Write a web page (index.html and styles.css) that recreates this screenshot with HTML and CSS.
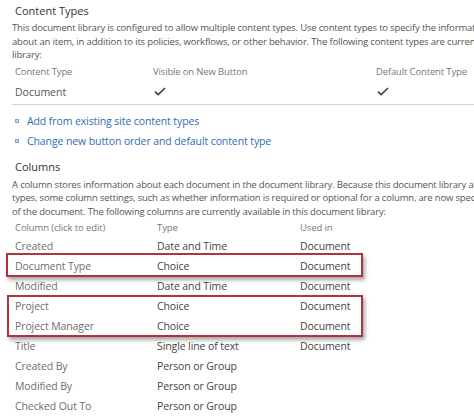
FILE: index.html
```html
<!DOCTYPE html>
<html>
<head>
<meta charset="utf-8">
<link rel="stylesheet" href="styles.css">
</head>
<body>
<div class="page">
  <section class="ct">
    <h2 class="sec-title">Content Types</h2>
    <p class="desc">
      <span class="ln">This document library is configured to allow multiple content types. Use content types to specify the information you want to display</span>
      <span class="ln">about an item, in addition to its policies, workflows, or other behavior. The following content types are currently available in this</span>
      <span class="ln">library:</span>
    </p>
    <div class="ct-table">
      <div class="ct-row ct-head">
        <span>Content Type</span>
        <span>Visible on New Button</span>
        <span>Default Content Type</span>
      </div>
      <div class="ct-row ct-body">
        <span>Document</span>
        <span><svg class="check" width="12" height="9" viewBox="0 0 12 9"><path d="M1 4.6 L4.2 7.6 L11 1" fill="none" stroke="#444" stroke-width="1.7"/></svg></span>
        <span><svg class="check" width="12" height="9" viewBox="0 0 12 9"><path d="M1 4.6 L4.2 7.6 L11 1" fill="none" stroke="#444" stroke-width="1.7"/></svg></span>
      </div>
    </div>
    <div class="sep"></div>
    <ul class="links">
      <li><span class="bullet"></span><a href="#">Add from existing site content types</a></li>
      <li><span class="bullet"></span><a href="#">Change new button order and default content type</a></li>
    </ul>
  </section>
  <section class="cols">
    <h2 class="sec-title">Columns</h2>
    <p class="desc">
      <span class="ln">A column stores information about each document in the document library. Because this document library allows multiple content</span>
      <span class="ln">types, some column settings, such as whether information is required or optional for a column, are now specified by the content type</span>
      <span class="ln">of the document. The following columns are currently available in this document library:</span>
    </p>
    <div class="col-table">
      <div class="col-row col-head"><span>Column (click to edit)</span><span>Type</span><span>Used in</span></div>
      <div class="col-row"><a href="#">Created</a><span>Date and Time</span><span>Document</span></div>
      <div class="group group-one">
        <div class="col-row"><a href="#">Document Type</a><span>Choice</span><span>Document</span></div>
      </div>
      <div class="col-row"><a href="#">Modified</a><span>Date and Time</span><span>Document</span></div>
      <div class="group group-two">
        <div class="col-row"><a href="#">Project</a><span>Choice</span><span>Document</span></div>
        <div class="col-row"><a href="#">Project Manager</a><span>Choice</span><span>Document</span></div>
      </div>
      <div class="col-row"><a href="#">Title</a><span>Single line of text</span><span>Document</span></div>
      <div class="col-row"><a href="#">Created By</a><span>Person or Group</span><span></span></div>
      <div class="col-row"><a href="#">Modified By</a><span>Person or Group</span><span></span></div>
      <div class="col-row"><a href="#">Checked Out To</a><span>Person or Group</span><span></span></div>
    </div>
  </section>
</div>
</body>
</html>
```
FILE: styles.css
```css
html, body {
  margin: 0;
  padding: 0;
  background: #fff;
  overflow: hidden;
}
body {
  width: 474px;
  height: 417px;
  font-family: "Open Sans", "Liberation Sans", sans-serif;
  color: #444;
}
.page {
  width: 700px;
  padding-left: 12px;
}
.sec-title {
  margin: 0;
  padding: 3px 0 0 3px;
  height: 16px;
  line-height: 16px;
  font-size: 11px;
  font-weight: normal;
  color: #333;
}
.desc {
  margin: 2px 0 0 0;
  font-size: 9.5px;
  letter-spacing: -0.17px;
  line-height: 13.5px;
  color: #555;
}
.ln {
  display: block;
  white-space: nowrap;
}
.ct-table {
  padding-left: 3px;
}
.ct-row {
  display: grid;
  grid-template-columns: 138px 223px 1fr;
  height: 20px;
  align-items: center;
  font-size: 10px;
}
.ct-head {
  color: #777;
  font-size: 9.5px;
  letter-spacing: -0.15px;
}
.ct-body {
  color: #555;
  font-size: 10.5px;
}
.check {
  display: block;
  margin-left: 1px;
}
.sep {
  margin-top: 2px;
  height: 1px;
  background: #d2d2d2;
}
.links {
  list-style: none;
  margin: 6px 0 0 0;
  padding: 0 0 0 3px;
}
.links li {
  display: flex;
  align-items: center;
  height: 20px;
  font-size: 10.5px;
  letter-spacing: -0.1px;
}
.bullet {
  width: 2px;
  height: 2px;
  border: 1px solid #8ea2b8;
  background: #c9d4df;
  margin-right: 8px;
}
.links a {
  color: #2f6db5;
  text-decoration: none;
}
.cols .sec-title {
  margin-top: 5px;
}
.cols .desc {
  margin-top: 3px;
}
.col-table {
  padding-left: 3px;
}
.col-row {
  display: grid;
  grid-template-columns: 142px 143px 1fr;
  height: 20px;
  align-items: center;
  font-size: 10.5px;
  letter-spacing: -0.1px;
  color: #444;
}
.col-row a {
  color: #6e6e6e;
  text-decoration: none;
}
.col-head {
  height: 18px;
  font-size: 9.5px;
  color: #777;
}
.group {
  position: relative;
}
.group::after {
  content: "";
  position: absolute;
  top: -3px;
  bottom: -1px;
  left: -9px;
  width: 353px;
  border: 2px solid #b2333d;
  box-shadow: 2px 3px 4px rgba(0, 0, 0, 0.35);
  pointer-events: none;
}
.group-two::after {
  left: -8px;
  width: 352px;
  top: -1px;
  bottom: -1px;
}
```
